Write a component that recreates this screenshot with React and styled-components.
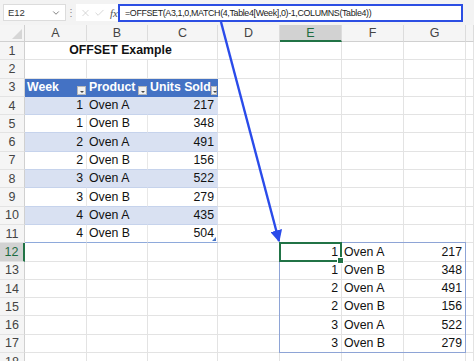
import React from "react";
import styled, { createGlobalStyle } from "styled-components";
import { X, Check, ChevronDown } from "lucide-react";

const GlobalStyle = createGlobalStyle`
  body {
    margin: 0;
    background: #ffffff;
    font-family: "Liberation Sans", Arial, sans-serif;
    overflow: hidden;
  }
`;

const Window = styled.div`
  position: relative;
  width: 474px;
  height: 361px;
  overflow: hidden;
  background: #ffffff;
`;

const FormulaBar = styled.div`
  display: flex;
  align-items: center;
  height: 25px;
  box-sizing: border-box;
  padding: 0 11px 0 3px;
  background: #f3f3f3;
`;

const NameBox = styled.div`
  display: flex;
  align-items: center;
  justify-content: space-between;
  width: 63px;
  height: 17px;
  box-sizing: border-box;
  padding: 0 4px 0 4px;
  background: #ffffff;
  border: 1px solid #dcdcdc;
  font-size: 9.5px;
  color: #333;
`;

const Dots = styled.span`
  width: 10px;
  text-align: center;
  font-size: 10px;
  color: #888;
`;

const IconGroup = styled.div`
  display: flex;
  align-items: center;
  gap: 3px;
  width: 42px;
  height: 17px;
  padding-left: 4px;
  box-sizing: border-box;
  background: #ffffff;
  color: #c4c4c4;
`;

const Fx = styled.span`
  font-family: "Liberation Serif", serif;
  font-style: italic;
  font-size: 11px;
  color: #555;
  margin-left: 2px;
`;

const FormulaInput = styled.div`
  flex: 1;
  height: 18px;
  box-sizing: border-box;
  display: flex;
  align-items: center;
  padding-left: 5px;
  border: 2px solid #2c4ee3;
  background: #ffffff;
  font-size: 8.9px;
  color: #222;
  white-space: nowrap;
  letter-spacing: -0.35px;
`;

const Sheet = styled.div`
  display: grid;
  grid-template-columns: 25px 62px 61px 70px 62px 62px 62px 62px 8px;
  grid-template-rows: 17px repeat(18, 18.3px);
`;

const ColHead = styled.div`
  grid-row: 1;
  grid-column: ${(p) => p.$c};
  display: flex;
  align-items: center;
  justify-content: center;
  box-sizing: border-box;
  background: ${(p) => (p.$sel ? "#d2d2d2" : "#f5f5f5")};
  border-right: 1px solid #dcdcdc;
  border-bottom: ${(p) => (p.$sel ? "2px solid #217346" : "1px solid #d0d0d0")};
  font-size: 12.5px;
  color: ${(p) => (p.$sel ? "#1d6b40" : "#444")};
`;

const Corner = styled.div`
  grid-row: 1;
  grid-column: 1;
  position: relative;
  background: #f5f5f5;
  border-right: 1px solid #d0d0d0;
  border-bottom: 1px solid #d0d0d0;
  box-sizing: border-box;
  &::after {
    content: "";
    position: absolute;
    right: 2px;
    bottom: 2px;
    border-left: 10px solid transparent;
    border-bottom: 10px solid #d6d6d6;
  }
`;

const RowHead = styled.div`
  grid-row: ${(p) => p.$r};
  grid-column: 1;
  display: flex;
  align-items: center;
  justify-content: center;
  box-sizing: border-box;
  background: ${(p) => (p.$sel ? "#d2d2d2" : "#f5f5f5")};
  border-right: ${(p) => (p.$sel ? "2px solid #217346" : "1px solid #d0d0d0")};
  border-bottom: 1px solid #e3e3e3;
  font-size: 12.5px;
  color: ${(p) => (p.$sel ? "#1d6b40" : "#444")};
`;

const Cell = styled.div`
  grid-row: ${(p) => p.$r};
  grid-column: ${(p) => p.$c};
  display: flex;
  align-items: flex-end;
  justify-content: ${(p) => (p.$align === "right" ? "flex-end" : p.$align === "center" ? "center" : "flex-start")};
  box-sizing: border-box;
  padding: 0 3px 1px 2px;
  background: ${(p) => p.$bg || "#ffffff"};
  border-right: 1px solid ${(p) => p.$vline || "#e3e3e3"};
  border-bottom: 1px solid ${(p) => p.$hline || "#e3e3e3"};
  font-size: 12.3px;
  line-height: 16px;
  font-weight: ${(p) => (p.$bold ? 700 : 400)};
  color: ${(p) => p.$color || "#111"};
  white-space: nowrap;
`;

const HeadCell = styled.div`
  grid-row: 4;
  grid-column: ${(p) => p.$c};
  display: flex;
  align-items: center;
  justify-content: space-between;
  box-sizing: border-box;
  padding-left: 2px;
  background: #4472c4;
  border-bottom: 1px solid #4472c4;
  color: #ffffff;
  font-size: 12.3px;
  font-weight: 700;
  white-space: nowrap;
`;

const FilterButton = styled.span`
  align-self: flex-end;
  width: 9px;
  height: 9px;
  margin: 0 1px 1px 0;
  background: #f2f2f2;
  border: 1px solid #b8b8b8;
  box-sizing: border-box;
  position: relative;
  &::after {
    content: "";
    position: absolute;
    left: 1.5px;
    bottom: 1px;
    border-left: 2.5px solid transparent;
    border-right: 2.5px solid transparent;
    border-top: 2.5px solid #444;
  }
`;

const ResizeHandle = styled.span`
  position: absolute;
  right: 1px;
  bottom: 1px;
  border-left: 4px solid transparent;
  border-bottom: 4px solid #4472c4;
`;

const TableEnd = styled(Cell)`
  position: relative;
`;

const SpillBox = styled.div`
  grid-row: 13 / 19;
  grid-column: 6 / 9;
  border: 1px solid #8ea4d6;
  margin: -1px 0 0 -1px;
  pointer-events: none;
`;

const Selection = styled.div`
  grid-row: 13;
  grid-column: 6;
  position: relative;
  border: 2px solid #217346;
  margin: -1px 0 0 -1px;
  pointer-events: none;
  &::after {
    content: "";
    position: absolute;
    right: -4px;
    bottom: -4px;
    width: 5px;
    height: 5px;
    background: #217346;
    border: 1px solid #ffffff;
  }
`;

const ArrowLayer = styled.svg`
  position: absolute;
  left: 0;
  top: 0;
  pointer-events: none;
`;

const columns = ["A", "B", "C", "D", "E", "F", "G", ""];

const sales = [
  [1, "Oven A", 217],
  [1, "Oven B", 348],
  [2, "Oven A", 491],
  [2, "Oven B", 156],
  [3, "Oven A", 522],
  [3, "Oven B", 279],
  [4, "Oven A", 435],
  [4, "Oven B", 504],
];

const formula = "=OFFSET(A3,1,0,MATCH(4,Table4[Week],0)-1,COLUMNS(Table4))";

const App = () => {
  const cells = [];

  for (let row = 1; row <= 18; row++) {
    const r = row + 1;
    cells.push(
      <RowHead key={`h${row}`} $r={r} $sel={row === 12}>
        {row}
      </RowHead>
    );

    for (let c = 2; c <= 9; c++) {
      const key = `${row}-${c}`;

      if (row === 1 && c <= 4) {
        if (c === 2) {
          cells.push(
            <Cell key={key} $r={r} $c="2 / 5" $align="center" $bold>
              OFFSET Example
            </Cell>
          );
        }
        continue;
      }

      if (row === 3 && c <= 4) continue;

      if (row >= 4 && row <= 11 && c <= 4) {
        const item = sales[row - 4];
        const band = row % 2 === 0;
        const bg = band ? "#d9e1f2" : "#ffffff";
        const hline = row === 11 ? "#8ea9db" : "#c6d3ec";
        const vline = band ? "#d9e1f2" : c === 4 ? "#e3e3e3" : "#e8e8e8";
        const value = item[c - 2];
        const Comp = row === 11 && c === 4 ? TableEnd : Cell;
        cells.push(
          <Comp
            key={key}
            $r={r}
            $c={c}
            $bg={bg}
            $hline={hline}
            $vline={vline}
            $align={c === 3 ? "left" : "right"}
          >
            {value}
            {row === 11 && c === 4 && <ResizeHandle />}
          </Comp>
        );
        continue;
      }

      if (row >= 12 && row <= 17 && c >= 6 && c <= 8) {
        const item = sales[row - 12];
        cells.push(
          <Cell key={key} $r={r} $c={c} $align={c === 7 ? "left" : "right"}>
            {item[c - 6]}
          </Cell>
        );
        continue;
      }

      cells.push(<Cell key={key} $r={r} $c={c} />);
    }
  }

  return (
    <Window>
      <GlobalStyle />
      <FormulaBar>
        <NameBox>
          <span>E12</span>
          <ChevronDown size={10} color="#666" strokeWidth={2} />
        </NameBox>
        <Dots>⋮</Dots>
        <IconGroup>
          <X size={12} strokeWidth={1.5} />
          <Check size={12} strokeWidth={1.5} />
          <Fx>fx</Fx>
        </IconGroup>
        <FormulaInput>{formula}</FormulaInput>
      </FormulaBar>

      <Sheet>
        <Corner />
        {columns.map((name, i) => (
          <ColHead key={`c${i}`} $c={i + 2} $sel={name === "E"}>
            {name}
          </ColHead>
        ))}
        {cells}
        <HeadCell $c={2}>
          Week
          <FilterButton />
        </HeadCell>
        <HeadCell $c={3}>
          Product
          <FilterButton />
        </HeadCell>
        <HeadCell $c={4}>
          Units Sold
          <FilterButton />
        </HeadCell>
        <SpillBox />
        <Selection />
      </Sheet>

      <ArrowLayer width="474" height="361">
        <defs>
          <marker
            id="head"
            viewBox="0 0 10 10"
            refX="9"
            refY="5"
            markerWidth="5"
            markerHeight="5"
            orient="auto"
          >
            <path d="M0,0 L10,5 L0,10 z" fill="#2a4bea" />
          </marker>
        </defs>
        <line
          x1="221"
          y1="22"
          x2="279"
          y2="241"
          stroke="#2a4bea"
          strokeWidth="2.4"
          markerEnd="url(#head)"
        />
      </ArrowLayer>
    </Window>
  );
};

export default App;
